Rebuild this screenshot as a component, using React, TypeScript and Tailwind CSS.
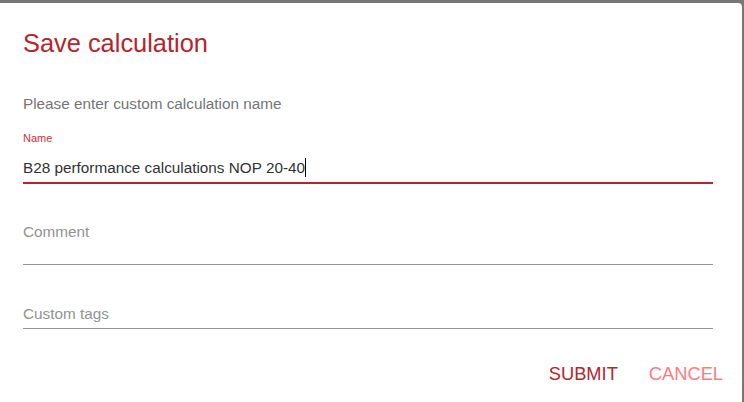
import React from 'react';

const font = { fontFamily: '"Liberation Sans", Arial, sans-serif' };

export default function App() {
  return (
    <div className="w-[744px] h-[402px] bg-[#777777] pt-[3px] pr-[2px] overflow-hidden" style={font}>
      <div className="h-full bg-white rounded-tr-[4px] flex flex-col">
        <div className="pl-[23px] pr-[29px]">
          {/* Title */}
          <h1 className="mt-[28px] text-[25.4px] leading-none text-[#b5252b] font-normal">Save calculation</h1>

          <p className="mt-[40px] text-[15.3px] leading-none text-[#757575]">Please enter custom calculation name</p>

          {/* Name field (focused) */}
          <div className="mt-[21px]">
            <div className="text-[11px] leading-none text-[#d0323a]">Name</div>
            <div className="mt-[14px] text-[15.3px] leading-none text-[#333333] flex items-center">
              B28 performance calculations NOP 20-40
              <span className="inline-block w-px h-[19px] bg-black" />
            </div>
            <div className="mt-[5px] h-[2px] bg-[#b5252b]" />
          </div>

          {/* Comment */}
          <div className="mt-[40px]">
            <div className="text-[15.3px] leading-none text-[#939393]">Comment</div>
            <div className="mt-[25px] h-px bg-[#949494]" />
          </div>

          {/* Custom tags */}
          <div className="mt-[41px]">
            <div className="text-[15.3px] leading-none text-[#939393]">Custom tags</div>
            <div className="mt-[7px] h-px bg-[#949494]" />
          </div>
        </div>

        {/* Actions */}
        <div className="mt-[36px] flex justify-end gap-[31px] pr-[19px]">
          <button className="text-[18.3px] leading-none text-[#b5252b] uppercase">Submit</button>
          <button className="text-[18.3px] leading-none text-[#ff7b84] uppercase">Cancel</button>
        </div>
      </div>
    </div>
  );
}
